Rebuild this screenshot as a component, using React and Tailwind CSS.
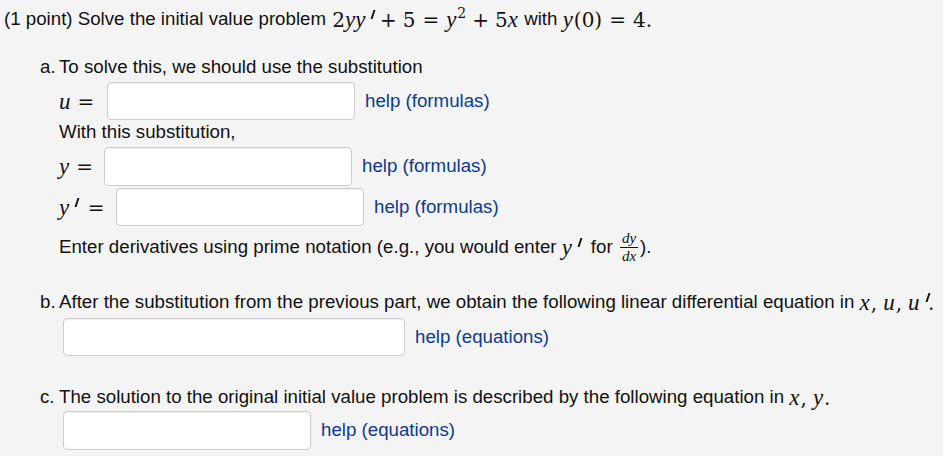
import React from 'react';

// TeX-ish math spans
const M = ({ children, className = '' }) => (
  <span className={`font-['DejaVu_Serif',serif] text-[20px] leading-none inline-flex items-baseline ${className}`}>{children}</span>
);
const V = ({ children }) => (
  <i className="font-['Liberation_Serif',serif] italic text-[23px] pr-[1px]">{children}</i>
);
const Eq = () => <span className="mx-[7px]">=</span>;
const Op = ({ c }) => <span className="mx-[6px]">{c}</span>;
const Prime = () => (
  <span className="inline-block ml-[6px] w-[1.5px] h-[9px] bg-current -skew-x-[18deg] relative -top-[8px]" />
);

function AnswerBox({ width, help }) {
  return (
    <>
      <div className={`${width} h-full bg-white border border-[#cccccc] rounded-[4px] shadow-[inset_0_1px_1px_rgba(0,0,0,0.06)]`} />
      <a className="ml-[10px] text-[#0d3a8c] cursor-pointer">help ({help})</a>
    </>
  );
}

export default function App() {
  return (
    <div className="w-[943px] h-[456px] overflow-hidden bg-[#f4f4f4] text-[#111] font-['Liberation_Sans',Arial,sans-serif] text-[18.7px]">
      <div className="h-[38px] pl-[4px] flex items-center whitespace-nowrap">
        <span>(1 point) Solve the initial value problem&nbsp;</span>
        <M className="ml-[1px]">
          2<V>yy</V><Prime /><Op c="+" />5<Eq /><V>y</V><sup className="text-[14px] -top-[9px]">2</sup><Op c="+" />5<V>x</V>
        </M>
        <span>&nbsp;with&nbsp;</span>
        <M>
          <V>y</V>(0)<Eq />4.
        </M>
      </div>

      <div className="mt-[17px] ml-[40px] flex">
        <span className="w-[19px] shrink-0 h-[24px] flex items-center">a.</span>
        <div className="flex flex-col">
          <div className="h-[24px] flex items-center whitespace-nowrap">To solve this, we should use the substitution</div>
          <div className="mt-[3px] h-[38px] flex items-center">
            <M className="w-[48px] shrink-0"><V>u</V><span className="ml-[6px]">=</span></M>
            <AnswerBox width="w-[248px]" help="formulas" />
          </div>
          <div className="h-[24px] flex items-center whitespace-nowrap">With this substitution,</div>
          <div className="mt-[3px] h-[39px] flex items-center">
            <M className="w-[45px] shrink-0"><V>y</V><span className="ml-[6px]">=</span></M>
            <AnswerBox width="w-[248px]" help="formulas" />
          </div>
          <div className="mt-[2px] h-[38px] flex items-center">
            <M className="w-[57px] shrink-0"><V>y</V><Prime /><span className="ml-[10px]">=</span></M>
            <AnswerBox width="w-[248px]" help="formulas" />
          </div>
          <div className="mt-[8px] h-[26px] flex items-center whitespace-nowrap">
            <span>Enter derivatives using prime notation (e.g., you would enter&nbsp;</span>
            <M><V>y</V><Prime /></M>
            <span>&nbsp;&nbsp;for&nbsp;</span>
            <span className="inline-flex flex-col items-center font-['Liberation_Serif',serif] italic text-[15px] leading-[13px] mx-[2px]">
              <span className="px-[2px]">dy</span>
              <span className="w-full border-t border-[#111] my-[2px]" />
              <span className="px-[2px]">dx</span>
            </span>
            <span>).</span>
          </div>
        </div>
      </div>

      <div className="mt-[30px] ml-[40px] flex">
        <span className="w-[19px] shrink-0 h-[24px] flex items-center">b.</span>
        <div className="flex flex-col">
          <div className="h-[24px] flex items-center whitespace-nowrap">
            <span>After the substitution from the previous part, we obtain the following linear differential equation in&nbsp;</span>
            <M><V>x</V>,<span className="w-[6px]" /><V>u</V>,<span className="w-[6px]" /><V>u</V><Prime />.</M>
          </div>
          <div className="mt-[4px] ml-[4px] h-[38px] flex items-center">
            <AnswerBox width="w-[342px]" help="equations" />
          </div>
        </div>
      </div>

      <div className="mt-[29px] ml-[40px] flex">
        <span className="w-[19px] shrink-0 h-[24px] flex items-center">c.</span>
        <div className="flex flex-col">
          <div className="h-[24px] flex items-center whitespace-nowrap">
            <span>The solution to the original initial value problem is described by the following equation in&nbsp;</span>
            <M><V>x</V>,<span className="w-[6px]" /><V>y</V>.</M>
          </div>
          <div className="mt-[2px] ml-[4px] h-[39px] flex items-center">
            <AnswerBox width="w-[248px]" help="equations" />
          </div>
        </div>
      </div>
    </div>
  );
}
